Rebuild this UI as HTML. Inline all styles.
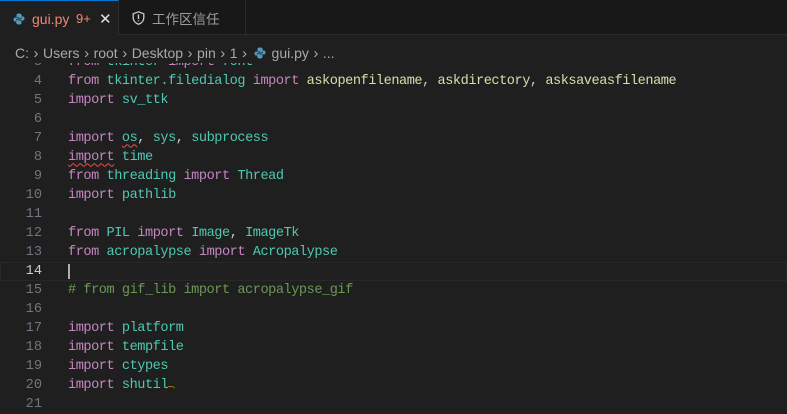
<!DOCTYPE html>
<html><head><meta charset="utf-8"><style>
*{margin:0;padding:0;box-sizing:border-box}
body{width:787px;height:408px;background:#1f1f1f;overflow:hidden;position:relative;font-family:"Liberation Sans","Noto Sans CJK SC",sans-serif}
.tabs{position:absolute;left:0;top:0;width:787px;height:35px;background:#181818;border-bottom:1px solid #2b2b2b;z-index:3}
.tab{position:absolute;top:0;height:35px;display:flex;align-items:center;font-size:14px}
.t1{left:0;width:119px;background:#1f1f1f;border-top:1px solid #0078d4;border-right:1px solid #2b2b2b;height:36px}
.t2{left:119px;width:127px;border-right:1px solid #2b2b2b;color:#9d9d9d}
.crumb{position:absolute;left:0;top:35px;width:787px;height:28px;padding-top:8px;background:#1f1f1f;color:#a9a9a9;font-size:14px;display:flex;align-items:center;padding-left:15px;z-index:2}
.crumb .s{color:#a9a9a9;margin:0 4.5px;font-size:15px}
.code{position:absolute;left:0;top:52.5px;width:787px;font-family:"Liberation Mono",monospace;font-size:13.6px;letter-spacing:-0.46px}
.l{height:19px;line-height:19px;position:relative;white-space:pre}
.n{position:absolute;left:0;width:42px;text-align:right;color:#6e7681;letter-spacing:0}
.c{position:absolute;left:68px}
.k{color:#c586c0}.m{color:#4ec9b0}.f{color:#dcdcaa}.w{color:#cccccc}.g{color:#6a9955}
.cur{position:absolute;left:0;top:0;width:787px;height:19px;border:1px solid #282828}
.sq{text-decoration:underline wavy #f14c4c;text-decoration-thickness:1px;text-underline-offset:3px}
</style></head><body>
<div class="tabs">
 <div class="tab t1">
  <svg style="position:absolute;left:13px;top:12px" width="12" height="12" viewBox="0 0 12 12"><path d="M6 0.5C3.5 0.5 3.5 1.5 3.5 2.5V4H6.5V4.5H2C1 4.5 0.5 5.5 0.5 6.5S1 8.5 2 8.5H3V7C3 6 4 5.5 5 5.5H7.5C8.3 5.5 8.8 5 8.8 4.2V2.5C8.8 1.5 8 0.5 6 0.5Z" fill="#519aba"/><path d="M6 11.5C8.5 11.5 8.5 10.5 8.5 9.5V8H5.5V7.5H10C11 7.5 11.5 6.5 11.5 5.5S11 3.5 10 3.5H9V5C9 6 8 6.5 7 6.5H4.5C3.7 6.5 3.2 7 3.2 7.8V9.5C3.2 10.5 4 11.5 6 11.5Z" fill="#519aba"/></svg>
  <span style="position:absolute;left:32px;color:#f48771">gui.py</span>
  <span style="position:absolute;left:76px;color:#f48771;font-size:13px">9+</span>
  <span style="position:absolute;left:99px;color:#e0e0e0;font-size:15px">✕</span>
 </div>
 <div class="tab t2">
  <svg style="position:absolute;left:13px;top:11px" width="13" height="14" viewBox="0 0 13 14"><path d="M6.5 0.8L1.2 2.8V6.5C1.2 9.7 3.5 12.2 6.5 13.2C9.5 12.2 11.8 9.7 11.8 6.5V2.8Z" fill="none" stroke="#cccccc" stroke-width="1.3"/><path d="M6.5 3.5V8M6.5 9.3V10.3" stroke="#cccccc" stroke-width="1.4"/></svg>
  <span style="position:absolute;left:33px;font-size:13.5px">工作区信任</span>
 </div>
</div>
<div class="crumb">C:<span class="s">›</span>Users<span class="s">›</span>root<span class="s">›</span>Desktop<span class="s">›</span>pin<span class="s">›</span>1<span class="s">›</span><svg width="12" height="12" viewBox="0 0 12 12" style="margin:0 6px 0 2px"><path d="M6 0.5C3.5 0.5 3.5 1.5 3.5 2.5V4H6.5V4.5H2C1 4.5 0.5 5.5 0.5 6.5S1 8.5 2 8.5H3V7C3 6 4 5.5 5 5.5H7.5C8.3 5.5 8.8 5 8.8 4.2V2.5C8.8 1.5 8 0.5 6 0.5Z" fill="#519aba"/><path d="M6 11.5C8.5 11.5 8.5 10.5 8.5 9.5V8H5.5V7.5H10C11 7.5 11.5 6.5 11.5 5.5S11 3.5 10 3.5H9V5C9 6 8 6.5 7 6.5H4.5C3.7 6.5 3.2 7 3.2 7.8V9.5C3.2 10.5 4 11.5 6 11.5Z" fill="#519aba"/></svg>gui.py<span class="s">›</span>...</div>
<div class="code">
<div class="l"><span class="n">3</span><span class="c"><span class="k">from</span> <span class="m">tkinter</span> <span class="k">import</span> <span class="m">font</span></span></div>
<div class="l"><span class="n">4</span><span class="c"><span class="k">from</span> <span class="m">tkinter.filedialog</span> <span class="k">import</span> <span class="f">askopenfilename</span><span class="w">, </span><span class="f">askdirectory</span><span class="w">, </span><span class="f">asksaveasfilename</span></span></div>
<div class="l"><span class="n">5</span><span class="c"><span class="k">import</span> <span class="m">sv_ttk</span></span></div>
<div class="l"><span class="n">6</span></div>
<div class="l"><span class="n">7</span><span class="c"><span class="k">import</span> <span class="m sq">os</span><span class="w">, </span><span class="m">sys</span><span class="w">, </span><span class="m">subprocess</span></span></div>
<div class="l"><span class="n">8</span><span class="c"><span class="k sq">import</span> <span class="m">time</span></span></div>
<div class="l"><span class="n">9</span><span class="c"><span class="k">from</span> <span class="m">threading</span> <span class="k">import</span> <span class="m">Thread</span></span></div>
<div class="l"><span class="n">10</span><span class="c"><span class="k">import</span> <span class="m">pathlib</span></span></div>
<div class="l"><span class="n">11</span></div>
<div class="l"><span class="n">12</span><span class="c"><span class="k">from</span> <span class="m">PIL</span> <span class="k">import</span> <span class="m">Image</span><span class="w">, </span><span class="m">ImageTk</span></span></div>
<div class="l"><span class="n">13</span><span class="c"><span class="k">from</span> <span class="m">acropalypse</span> <span class="k">import</span> <span class="m">Acropalypse</span></span></div>
<div class="l"><div class="cur"></div><span class="n" style="color:#cccccc">14</span><span style="position:absolute;left:68px;top:2px;width:2px;height:15px;background:#aeafad"></span></div>
<div class="l"><span class="n">15</span><span class="c g"># from gif_lib import acropalypse_gif</span></div>
<div class="l"><span class="n">16</span></div>
<div class="l"><span class="n">17</span><span class="c"><span class="k">import</span> <span class="m">platform</span></span></div>
<div class="l"><span class="n">18</span><span class="c"><span class="k">import</span> <span class="m">tempfile</span></span></div>
<div class="l"><span class="n">19</span><span class="c"><span class="k">import</span> <span class="m">ctypes</span></span></div>
<div class="l"><span class="n">20</span><span class="c"><span class="k">import</span> <span class="m">shutil</span><span style="color:#cca700;font-size:9px;position:relative;top:6px;left:-2px">⌒</span></span></div>
<div class="l"><span class="n">21</span></div>
</div>
</body></html>
